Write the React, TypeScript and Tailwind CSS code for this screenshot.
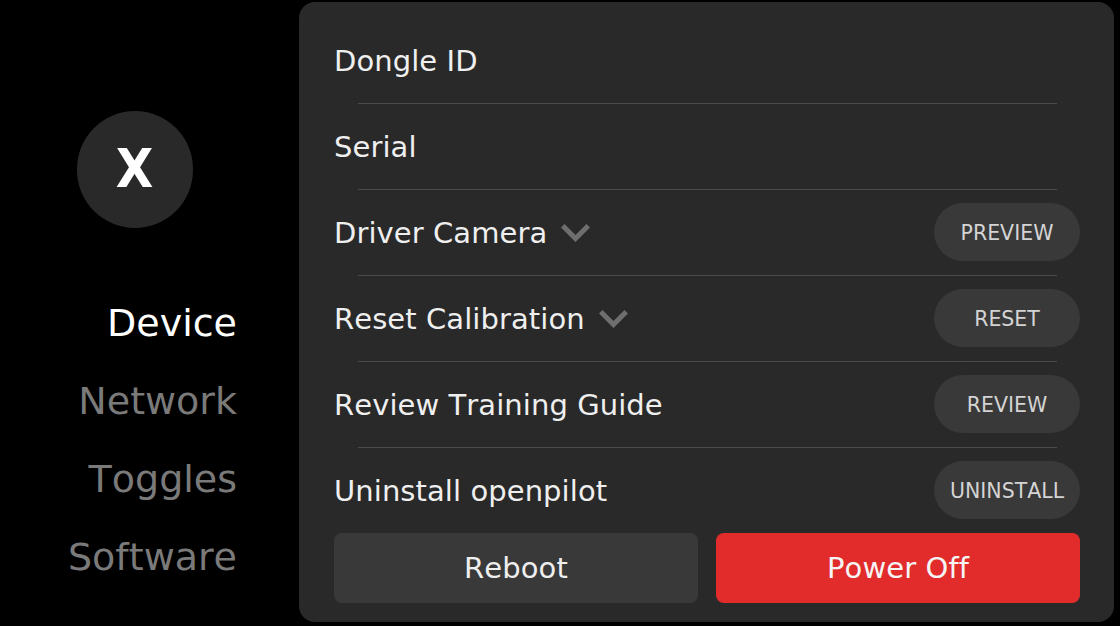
const font = "font-['DejaVu_Sans',sans-serif] [font-kerning:none]"

const navItems = [
  { label: "Device", active: true },
  { label: "Network", active: false },
  { label: "Toggles", active: false },
  { label: "Software", active: false },
]

const rows = [
  { label: "Dongle ID" },
  { label: "Serial" },
  { label: "Driver Camera", chevron: true, action: "PREVIEW" },
  { label: "Reset Calibration", chevron: true, action: "RESET" },
  { label: "Review Training Guide", action: "REVIEW" },
  { label: "Uninstall openpilot", action: "UNINSTALL" },
]

const Chevron = () => (
  <svg width="30" height="18" viewBox="0 0 30 18" className="ml-[14px]">
    <path d="M1.75 1.77 L14.5 14.52 L27.25 1.77" fill="none" stroke="#6e6e6e" strokeWidth="5" />
  </svg>
)

const Row = ({
  label,
  chevron,
  action,
}: {
  label: string
  chevron?: boolean
  action?: string
}) => (
  <div className="flex h-[85px] items-center justify-between">
    <div className="flex items-center">
      <span className="pt-[2px] text-[29px] tracking-[0.08px] text-[#efefef]">{label}</span>
      {chevron && <Chevron />}
    </div>
    {action && (
      <button
        type="button"
        className="mb-[2px] flex h-[58px] w-[146px] items-center justify-center rounded-full bg-[#393939] pt-[4px] text-[20.5px] text-[#d4d4d4]"
      >
        {action}
      </button>
    )}
  </div>
)

export default function App() {
  return (
    <div className={`flex h-[626px] w-[1120px] overflow-hidden bg-black ${font}`}>
      <aside className="flex w-[299px] shrink-0 flex-col">
        <div className="ml-[76.6px] mt-[111px] flex h-[116.6px] w-[116.6px] items-center justify-center rounded-full bg-[#292929]">
          <span className="scale-x-[0.92] pb-[2px] text-[53px] leading-none font-bold text-white">X</span>
        </div>
        <nav className="mt-[56.4px] flex flex-col pr-[62px] text-right">
          {navItems.map((item) => (
            <div
              key={item.label}
              className={`h-[78px] text-[38px] leading-[78px] ${item.active ? "text-white" : "text-[#7a7a7a]"}`}
            >
              {item.label}
            </div>
          ))}
        </nav>
      </aside>
      <main className="mt-[2px] flex h-[620px] w-[815px] flex-col rounded-[16px] bg-[#292929] pl-[35px] pr-[34px] pt-[16px]">
        {rows.map((row, i) => (
          <div key={row.label}>
            {i > 0 && <div className="ml-[24px] mr-[23px] h-px bg-[#4a4a4a]" />}
            <Row {...row} />
          </div>
        ))}
        <div className="flex gap-[18px]">
          <button
            type="button"
            className="h-[70px] w-[364px] rounded-[8px] bg-[#393939] pt-[2px] text-[29px] tracking-[0.1px] text-[#efefef]"
          >
            Reboot
          </button>
          <button
            type="button"
            className="h-[70px] w-[364px] rounded-[8px] bg-[#e22c2c] pt-[2px] text-[29px] tracking-[0.1px] text-[#f5f5f5]"
          >
            Power Off
          </button>
        </div>
      </main>
    </div>
  )
}
